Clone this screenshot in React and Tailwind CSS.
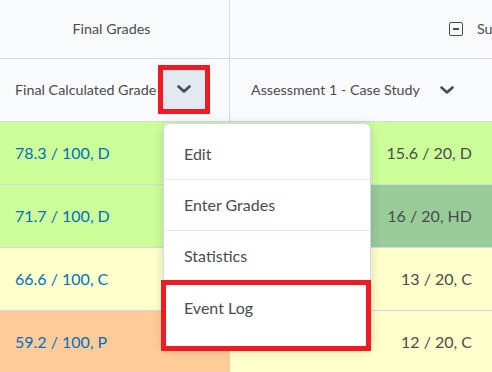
import React from "react";

const rows = [
  { a: "78.3 / 100, D", b: "15.6 / 20, D", ca: "bg-[#ccff99]", cb: "bg-[#ccff99]" },
  { a: "71.7 / 100, D", b: "16 / 20, HD", ca: "bg-[#ccff99]", cb: "bg-[#99cc99]" },
  { a: "66.6 / 100, C", b: "13 / 20, C", ca: "bg-[#ffffcc]", cb: "bg-[#ffffcc]" },
  { a: "59.2 / 100, P", b: "12 / 20, C", ca: "bg-[#ffcc99]", cb: "bg-[#ffffcc]" },
];

const menuItems = ["Edit", "Enter Grades", "Statistics", "Event Log"];

const Chevron = ({ className }) => (
  <svg viewBox="0 0 14 8" className={className} fill="none">
    <path d="M1.5 1.5 L7 6.5 L12.5 1.5" stroke="#494c4e" strokeWidth="2.6" strokeLinecap="round" strokeLinejoin="round" />
  </svg>
);

export default function App() {
  return (
    <div className="relative w-[492px] h-[372px] overflow-hidden bg-white font-['Lato',sans-serif] text-[#494c4e]">
      {/* header: group row */}
      <div className="flex h-[59px] bg-[#f9fafc] border-b border-[#d3d9e3]">
        <div className="w-[230px] border-r border-[#d3d9e3] flex items-center justify-center pr-[6px] text-[14.3px]">
          Final Grades
        </div>
        <div className="flex-1 flex items-center pl-[219px] gap-[14px] whitespace-nowrap overflow-hidden text-[14.3px]">
          <span className="w-[14px] h-[14px] shrink-0 rounded-[2px] border-[1.5px] border-[#494c4e] flex items-center justify-center">
            <span className="w-[6px] h-[2px] bg-[#494c4e]" />
          </span>
          <span>Subtotal</span>
        </div>
      </div>

      {/* header: column row */}
      <div className="flex h-[63px] bg-[#f9fafc] border-b border-[#d3d9e3]">
        <div className="w-[230px] border-r border-[#d3d9e3] flex items-center pl-[15px] text-[14.3px]">
          <span className="whitespace-nowrap">Final Calculated Grade</span>
          <button className="ml-[2px] -mt-[2px] w-[52px] h-[49px] shrink-0 border-[5px] border-[#ed1c24] bg-[#e3e9f1] flex items-center justify-center">
            <Chevron className="w-[14px] h-[8px]" />
          </button>
        </div>
        <div className="flex-1 flex items-center pl-[21px] text-[14.3px] whitespace-nowrap">
          <span>Assessment 1 - Case Study</span>
          <Chevron className="ml-[20px] w-[14px] h-[8px]" />
        </div>
      </div>

      {/* grade rows */}
      {rows.map((r) => (
        <div key={r.a} className="flex h-[63px] border-b border-[#d3d9e3] text-[16px]">
          <div className={`w-[230px] flex items-center pl-[15px] text-[#006fbf] ${r.ca}`}>{r.a}</div>
          <div className={`flex-1 flex items-center justify-end pr-[20px] ${r.cb}`}>{r.b}</div>
        </div>
      ))}

      {/* context menu */}
      <div className="absolute left-[163px] top-[123px] w-[208px] bg-white border border-[#d3d9e3] rounded-[6px] shadow-[0_2px_12px_rgba(0,0,0,0.15)] pt-[5px] pb-[14px]">
        {menuItems.map((m, i) => (
          <div
            key={m}
            className={`h-[51px] flex items-center pl-[20px] text-[16px] ${i < menuItems.length - 1 ? "border-b border-[#e3e9f1]" : ""}`}
          >
            {m}
          </div>
        ))}
      </div>

      {/* highlight box */}
      <div className="absolute left-[161px] top-[280px] w-[210px] h-[71px] border-[5px] border-[#ed1c24]" />
    </div>
  );
}
